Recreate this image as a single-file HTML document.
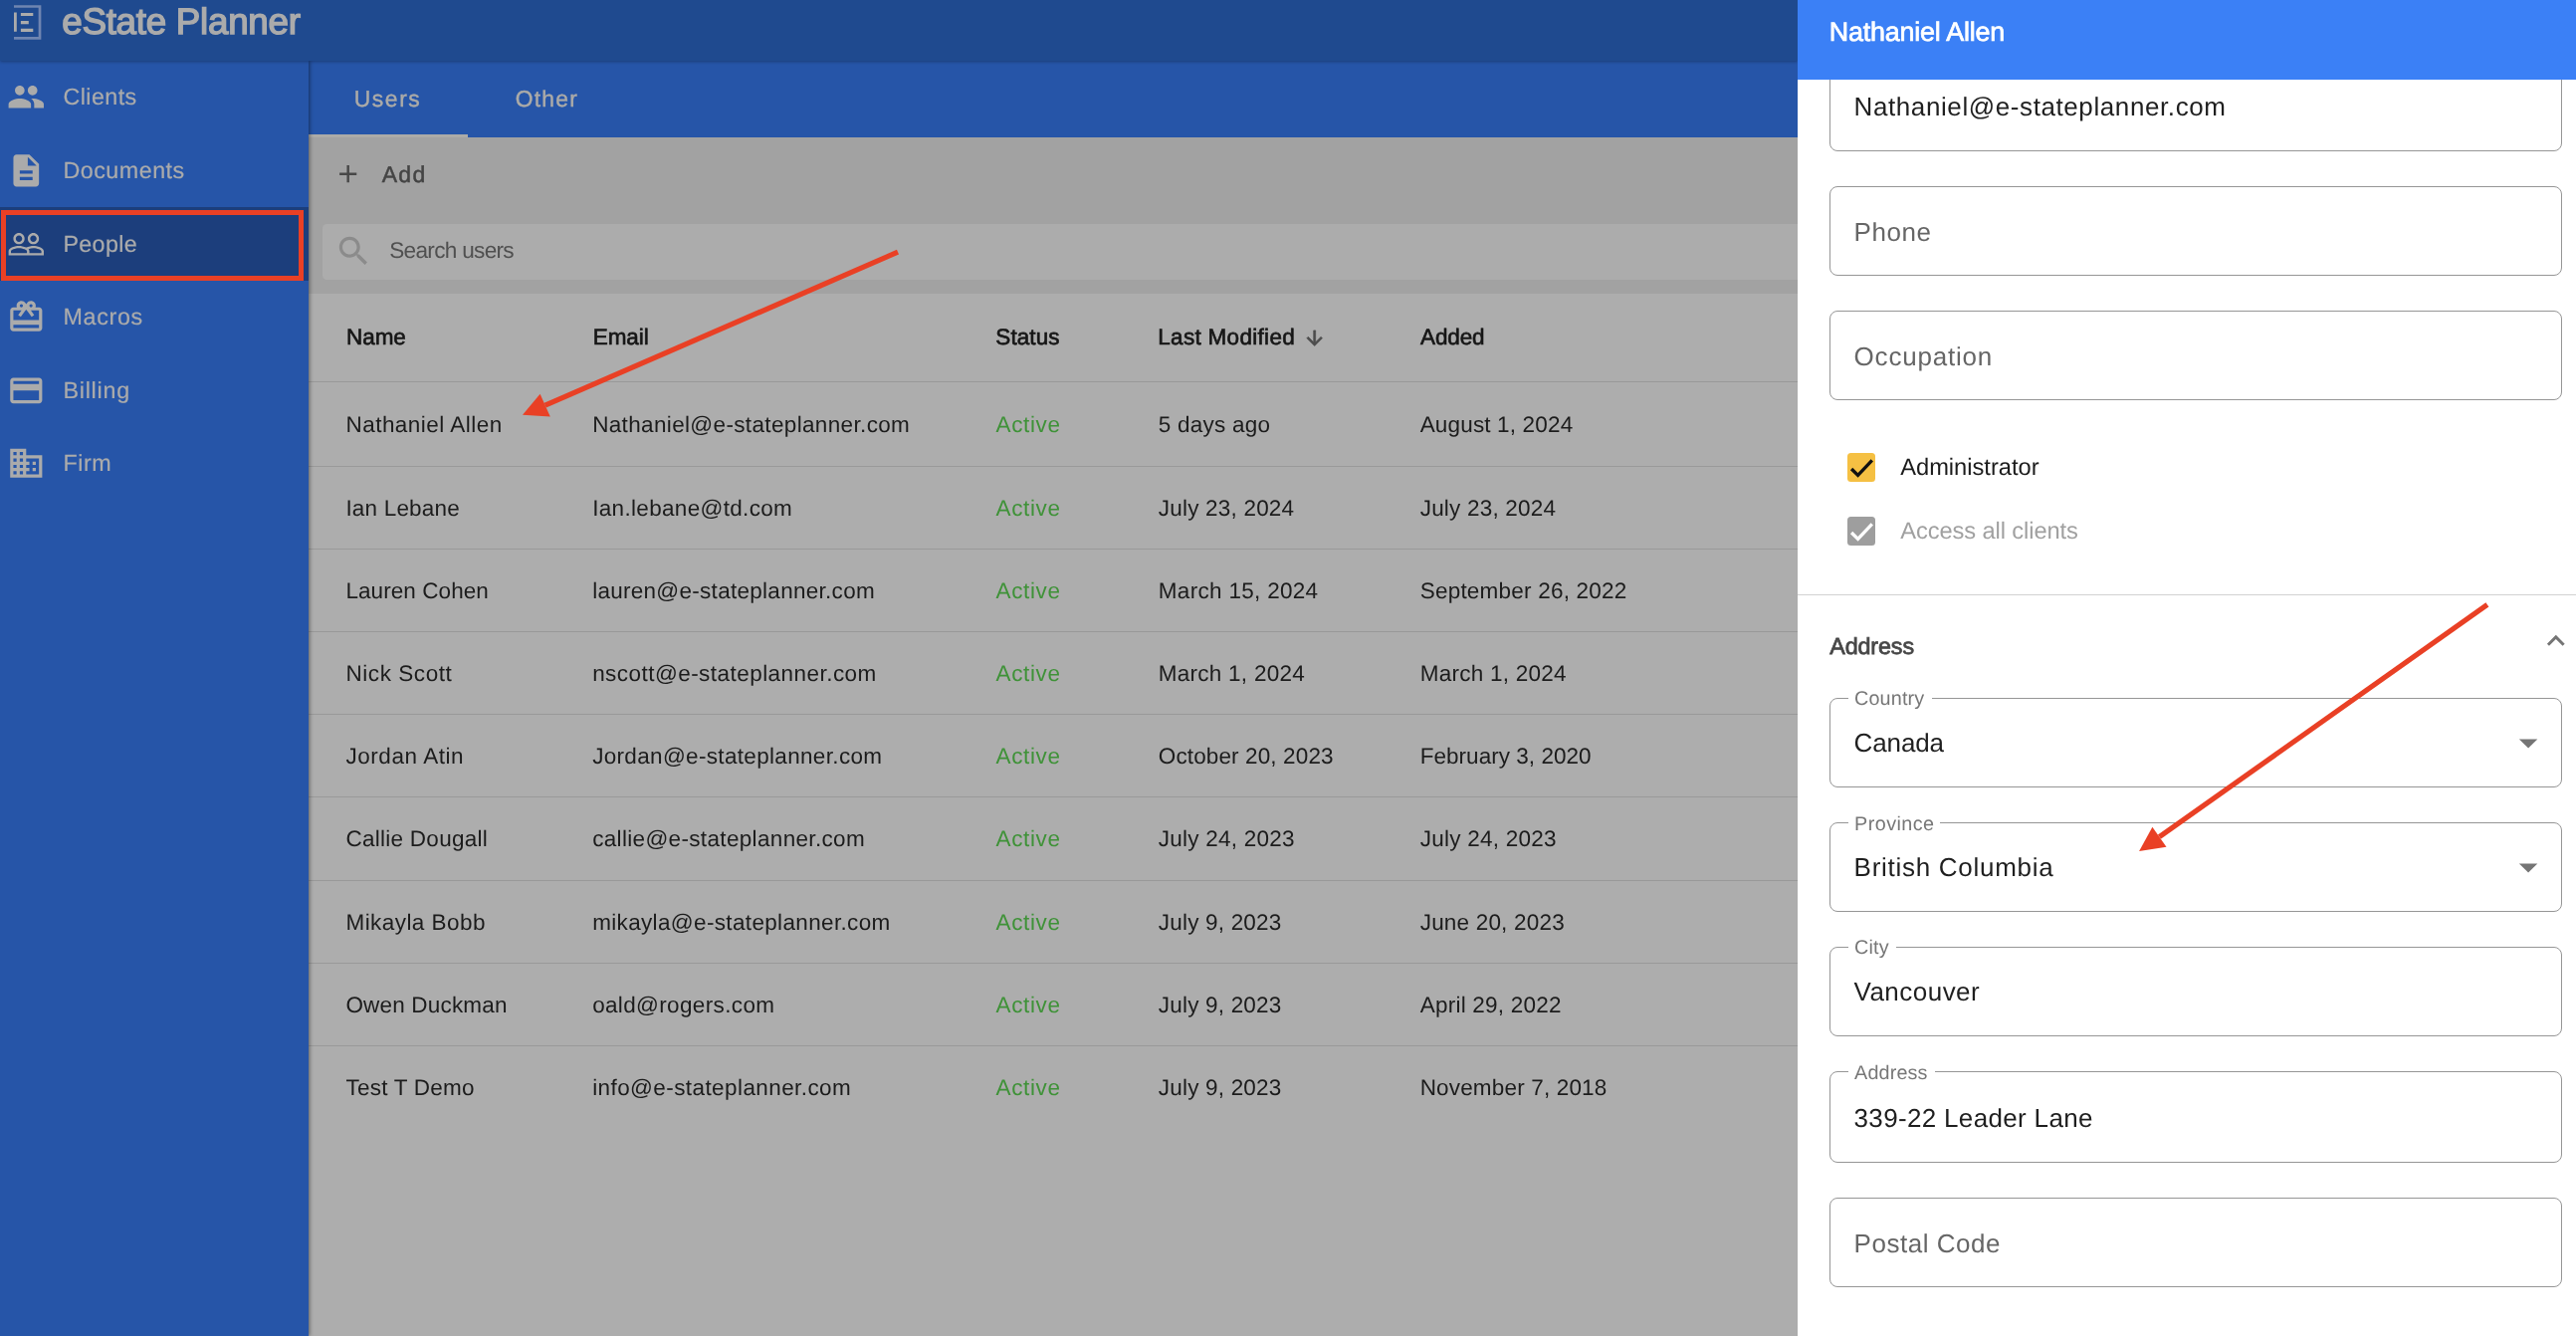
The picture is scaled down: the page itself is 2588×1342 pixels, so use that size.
<!DOCTYPE html>
<html><head><meta charset="utf-8"><title>eState Planner</title>
<style>
html,body{margin:0;padding:0}
body{width:2588px;height:1342px;overflow:hidden;position:relative;background:#adadad;font-family:"Liberation Sans", sans-serif}
div,svg{position:absolute}
.t{white-space:pre;line-height:1;font-weight:400;text-rendering:geometricPrecision}
.i{display:block}
.f{left:1838px;width:736px;box-sizing:border-box;border:1px solid #969696;border-radius:8px;background:#fff}
.n{height:4px;background:#fff}
.rl{left:310px;width:1496px;height:1px;background:#999999}
</style></head><body>
<!-- main area -->
<div style="left:310px;top:61px;width:1496px;height:77px;background:#2655a8"></div>
<div style="left:310px;top:135px;width:160px;height:3px;background:#acaba8"></div>
<div style="left:310px;top:138px;width:1496px;height:157px;background:#a2a2a2"></div>
<div style="left:324px;top:225px;width:1500px;height:56px;background:#acacac;border-radius:4.500px"></div>
<div style="left:310px;top:295px;width:1496px;height:1047px;background:#adadad"></div>
<div class="rl" style="top:383px"></div>
<div class="rl" style="top:468px"></div>
<div class="rl" style="top:551px"></div>
<div class="rl" style="top:634px"></div>
<div class="rl" style="top:717px"></div>
<div class="rl" style="top:800px"></div>
<div class="rl" style="top:884px"></div>
<div class="rl" style="top:967px"></div>
<div class="rl" style="top:1050px"></div>
<!-- sidebar -->
<div style="left:0;top:61px;width:309.500px;height:1281px;background:#2655a8;box-shadow:1px 0 4px rgba(0,0,0,.45)"></div>
<div style="left:0;top:208px;width:309.500px;height:74px;background:#1c3e7c"></div>
<div style="left:1px;top:211px;width:304px;height:71px;box-sizing:border-box;border:5px solid #e94025"></div>
<!-- header -->
<div style="left:0;top:0;width:1806px;height:61.400px;background:#1f4a8f;box-shadow:0 1px 3px rgba(0,0,0,.3)"></div>
<svg class="i" style="left:0;top:0" width="60" height="60" viewBox="0 0 60 60"><path fill="none" stroke="#6f85b1" stroke-width="2.700" d="M14 6.500H40V38.400H14"/><path fill="#ababab" d="M14 12.400h2.800v19.300H14zM20.900 13h12.400v3.100H20.900zM20.900 21.100h7.900v3.100H20.900zM20.900 28.800h12.400v3.100H20.900z"/></svg>
<!-- panel -->
<div style="left:1806px;top:0;width:782px;height:1342px;background:#fff"></div>
<div class="f" style="top:62px;height:90px"></div>
<div class="f" style="top:187px;height:90px"></div>
<div class="f" style="top:312px;height:90px"></div>
<div class="f" style="top:701px;height:90px"></div>
<div class="n" style="left:1857.0px;width:84.2px;top:700px"></div>
<div class="f" style="top:826px;height:90px"></div>
<div class="n" style="left:1857.0px;width:92.0px;top:825px"></div>
<div class="f" style="top:951px;height:90px"></div>
<div class="n" style="left:1857.0px;width:48.0px;top:950px"></div>
<div class="f" style="top:1076px;height:92px"></div>
<div class="n" style="left:1856.7px;width:87.3px;top:1075px"></div>
<div class="f" style="top:1203px;height:90px"></div>
<div style="left:1806px;top:0;width:782px;height:80px;background:#3b80f6"></div>
<div style="left:1856px;top:455px;width:28px;height:29px;border-radius:3.500px;background:#f5c043"></div>
<svg class="i" style="left:1856px;top:455px" width="28" height="29" viewBox="0 0 28 29"><path fill="none" stroke="#111" stroke-width="3.300" d="M4.100 16L10.600 22.500L24.800 7.300"/></svg>
<div style="left:1856px;top:519px;width:28px;height:29px;border-radius:3.500px;background:#9e9e9e"></div>
<svg class="i" style="left:1856px;top:519px" width="28" height="29" viewBox="0 0 28 29"><path fill="none" stroke="#fff" stroke-width="3.300" d="M4.100 16L10.600 22.500L24.800 7.300"/></svg>
<div style="left:1806px;top:597px;width:782px;height:1px;background:#d2d2d2"></div>
<svg class="i" style="left:7.4px;top:77.5px" width="38.6" height="38.6" viewBox="0 0 24 24"><path fill="#ababab" d="M16 11c1.66 0 2.99-1.34 2.99-3S17.66 5 16 5c-1.66 0-3 1.34-3 3s1.34 3 3 3zm-8 0c1.66 0 2.99-1.34 2.99-3S9.66 5 8 5C6.34 5 5 6.34 5 8s1.34 3 3 3zm0 2c-2.33 0-7 1.17-7 3.5V19h14v-2.5c0-2.33-4.67-3.5-7-3.5zm8 0c-.29 0-.62.02-.97.05 1.16.84 1.97 1.97 1.97 3.45V19h6v-2.5c0-2.33-4.67-3.5-7-3.5z"/></svg>
<svg class="i" style="left:7.4px;top:151.7px" width="38.6" height="38.6" viewBox="0 0 24 24"><path fill="#ababab" d="M14 2H6c-1.1 0-1.99.9-1.99 2L4 20c0 1.1.89 2 1.99 2H18c1.1 0 2-.9 2-2V8l-6-6zm2 16H8v-2h8v2zm0-4H8v-2h8v2zm-3-5V3.5L18.5 9H13z"/></svg>
<svg class="i" style="left:7.4px;top:225.7px" width="38.6" height="38.6" viewBox="0 0 24 24"><path fill="#ababab" d="M16.5 13c-1.2 0-3.07.34-4.5 1-1.43-.67-3.3-1-4.5-1C5.33 13 1 14.08 1 16.25V19h22v-2.75c0-2.17-4.33-3.25-6.5-3.25zm-4 4.5h-10v-1.25c0-.54 2.56-1.75 5-1.75s5 1.21 5 1.75v1.25zm9 0H14v-1.25c0-.46-.2-.86-.52-1.22.88-.3 1.96-.53 3.02-.53 2.44 0 5 1.21 5 1.75v1.25zM7.5 12c1.93 0 3.5-1.57 3.5-3.5S9.43 5 7.5 5 4 6.57 4 8.5 5.57 12 7.5 12zm0-5.5c1.1 0 2 .9 2 2s-.9 2-2 2-2-.9-2-2 .9-2 2-2zm9 5.5c1.93 0 3.5-1.57 3.5-3.5S18.43 5 16.5 5 13 6.57 13 8.5s1.57 3.5 3.5 3.5zm0-5.5c1.1 0 2 .9 2 2s-.9 2-2 2-2-.9-2-2 .9-2 2-2z"/></svg>
<svg class="i" style="left:7.4px;top:299.0px" width="38.6" height="38.6" viewBox="0 0 24 24"><path fill="#ababab" d="M20 6h-2.18c.11-.31.18-.65.18-1 0-1.66-1.34-3-3-3-1.05 0-1.96.54-2.5 1.35l-.5.67-.5-.68C10.96 2.54 10.05 2 9 2 7.34 2 6 3.34 6 5c0 .35.07.69.18 1H4c-1.11 0-1.99.89-1.99 2L2 19c0 1.11.89 2 2 2h16c1.11 0 2-.89 2-2V8c0-1.11-.89-2-2-2zm-5-2c.55 0 1 .45 1 1s-.45 1-1 1-1-.45-1-1 .45-1 1-1zM9 4c.55 0 1 .45 1 1s-.45 1-1 1-1-.45-1-1 .45-1 1-1zm11 15H4v-2h16v2zm0-5H4V8h5.08L7 10.83 8.62 12 11 8.76l1-1.36 1 1.36L15.38 12 17 10.83 14.92 8H20v6z"/></svg>
<svg class="i" style="left:7.4px;top:372.6px" width="38.6" height="38.6" viewBox="0 0 24 24"><path fill="#ababab" d="M20 4H4c-1.11 0-1.99.89-1.99 2L2 18c0 1.11.89 2 2 2h16c1.11 0 2-.89 2-2V6c0-1.11-.89-2-2-2zm0 14H4v-6h16v6zm0-10H4V6h16v2z"/></svg>
<svg class="i" style="left:7.4px;top:445.6px" width="38.6" height="38.6" viewBox="0 0 24 24"><path fill="#ababab" d="M12 7V3H2v18h20V7H12zM6 19H4v-2h2v2zm0-4H4v-2h2v2zm0-4H4V9h2v2zm0-4H4V5h2v2zm4 12H8v-2h2v2zm0-4H8v-2h2v2zm0-4H8V9h2v2zm0-4H8V5h2v2zm10 12h-8v-2h2v-2h-2v-2h2v-2h-2V9h8v10zm-2-8h-2v2h2v-2zm0 4h-2v2h2v-2z"/></svg>
<svg class="i" style="left:334.8px;top:159.9px" width="29.4" height="29.4" viewBox="0 0 24 24"><path fill="#484848" d="M19 13h-6v6h-2v-6H5v-2h6V5h2v6h6v2z"/></svg>
<svg class="i" style="left:336.0px;top:233.1px" width="38.6" height="38.6" viewBox="0 0 24 24"><path fill="#8b8b8b" d="M15.5 14h-.79l-.28-.27C15.41 12.59 16 11.11 16 9.5 16 5.91 13.09 3 9.5 3S3 5.91 3 9.5 5.91 16 9.5 16c1.61 0 3.09-.59 4.23-1.57l.27.28v.79l5 4.99L20.49 19l-4.99-5zm-6 0C7.01 14 5 11.99 5 9.5S7.01 5 9.5 5 14 7.01 14 9.5 11.99 14 9.5 14z"/></svg>
<svg class="i" style="left:1308.7px;top:328.4px" width="23.4" height="23.4" viewBox="0 0 24 24"><path stroke="#4d4d4d" stroke-width="0.7" fill="#4d4d4d" d="M20 12l-1.41-1.41L13 16.17V4h-2v12.17l-5.58-5.59L4 12l8 8 8-8z"/></svg>
<svg class="i" style="left:2549.5px;top:625.8px" width="35.6" height="35.6" viewBox="0 0 24 24"><path fill="#757575" d="M12 8l-6 6 1.41 1.41L12 10.83l4.59 4.58L18 14z"/></svg>
<svg class="i" style="left:2517.5px;top:724.1px" width="44.2" height="44.2" viewBox="0 0 24 24"><path fill="#757575" d="M7 10l5 5 5-5z"/></svg>
<svg class="i" style="left:2517.5px;top:848.6px" width="44.2" height="44.2" viewBox="0 0 24 24"><path fill="#757575" d="M7 10l5 5 5-5z"/></svg>
<div style="left:0;top:0;width:2588px;height:1342px;will-change:transform">
<div class="t" style="left:62.25px;top:4.00px;font-size:36.8px;color:#ababab;letter-spacing:-0.287px;-webkit-text-stroke:1.4px #ababab;">eState Planner</div>
<div class="t" style="left:63.41px;top:86.00px;font-size:23.3px;color:#ababab;letter-spacing:0.433px;-webkit-text-stroke:0.2px #ababab;">Clients</div>
<div class="t" style="left:63.41px;top:160.00px;font-size:23.3px;color:#ababab;letter-spacing:0.501px;-webkit-text-stroke:0.2px #ababab;">Documents</div>
<div class="t" style="left:63.41px;top:234.00px;font-size:23.3px;color:#ababab;letter-spacing:0.343px;-webkit-text-stroke:0.2px #ababab;">People</div>
<div class="t" style="left:63.41px;top:307.00px;font-size:23.3px;color:#ababab;letter-spacing:0.693px;-webkit-text-stroke:0.2px #ababab;">Macros</div>
<div class="t" style="left:63.41px;top:381.00px;font-size:23.3px;color:#ababab;letter-spacing:0.761px;-webkit-text-stroke:0.2px #ababab;">Billing</div>
<div class="t" style="left:63.41px;top:454.00px;font-size:23.3px;color:#ababab;letter-spacing:0.583px;-webkit-text-stroke:0.2px #ababab;">Firm</div>
<div class="t" style="left:355.77px;top:88.00px;font-size:22.9px;color:#acaba8;letter-spacing:1.562px;-webkit-text-stroke:0.4px #acaba8;">Users</div>
<div class="t" style="left:517.73px;top:88.00px;font-size:22.9px;color:#acaba8;letter-spacing:1.228px;-webkit-text-stroke:0.4px #acaba8;">Other</div>
<div class="t" style="left:383.75px;top:164.00px;font-size:23.0px;color:#444444;letter-spacing:1.284px;-webkit-text-stroke:0.5px #444444;">Add</div>
<div class="t" style="left:391.19px;top:241.00px;font-size:22.6px;color:#505050;letter-spacing:-0.694px;">Search users</div>
<div class="t" style="left:347.97px;top:328.00px;font-size:22.5px;color:#161616;letter-spacing:-0.033px;-webkit-text-stroke:0.65px #161616;">Name</div>
<div class="t" style="left:595.67px;top:328.00px;font-size:22.5px;color:#161616;letter-spacing:-0.018px;-webkit-text-stroke:0.65px #161616;">Email</div>
<div class="t" style="left:1000.32px;top:328.00px;font-size:22.5px;color:#161616;letter-spacing:0.074px;-webkit-text-stroke:0.65px #161616;">Status</div>
<div class="t" style="left:1163.27px;top:328.00px;font-size:22.5px;color:#161616;letter-spacing:0.304px;-webkit-text-stroke:0.65px #161616;">Last Modified</div>
<div class="t" style="left:1427.03px;top:328.00px;font-size:22.5px;color:#161616;letter-spacing:-0.112px;-webkit-text-stroke:0.65px #161616;">Added</div>
<div class="t" style="left:347.44px;top:416.00px;font-size:22.5px;color:#1c1c1c;letter-spacing:0.477px;">Nathaniel Allen</div>
<div class="t" style="left:595.14px;top:416.00px;font-size:22.5px;color:#1c1c1c;letter-spacing:0.350px;">Nathaniel@e-stateplanner.com</div>
<div class="t" style="left:1000.50px;top:416.00px;font-size:22.5px;color:#3f9238;letter-spacing:0.648px;">Active</div>
<div class="t" style="left:1163.80px;top:416.00px;font-size:22.5px;color:#1c1c1c;letter-spacing:0.226px;">5 days ago</div>
<div class="t" style="left:1426.70px;top:416.00px;font-size:22.5px;color:#1c1c1c;letter-spacing:0.161px;">August 1, 2024</div>
<div class="t" style="left:347.44px;top:500.00px;font-size:22.5px;color:#1c1c1c;letter-spacing:0.184px;">Ian Lebane</div>
<div class="t" style="left:595.14px;top:500.00px;font-size:22.5px;color:#1c1c1c;letter-spacing:0.329px;">Ian.lebane@td.com</div>
<div class="t" style="left:1000.50px;top:500.00px;font-size:22.5px;color:#3f9238;letter-spacing:0.648px;">Active</div>
<div class="t" style="left:1163.80px;top:500.00px;font-size:22.5px;color:#1c1c1c;letter-spacing:0.205px;">July 23, 2024</div>
<div class="t" style="left:1426.70px;top:500.00px;font-size:22.5px;color:#1c1c1c;letter-spacing:0.205px;">July 23, 2024</div>
<div class="t" style="left:347.44px;top:583.00px;font-size:22.5px;color:#1c1c1c;letter-spacing:0.073px;">Lauren Cohen</div>
<div class="t" style="left:595.14px;top:583.00px;font-size:22.5px;color:#1c1c1c;letter-spacing:0.284px;">lauren@e-stateplanner.com</div>
<div class="t" style="left:1000.50px;top:583.00px;font-size:22.5px;color:#3f9238;letter-spacing:0.648px;">Active</div>
<div class="t" style="left:1163.80px;top:583.00px;font-size:22.5px;color:#1c1c1c;letter-spacing:0.306px;">March 15, 2024</div>
<div class="t" style="left:1426.70px;top:583.00px;font-size:22.5px;color:#1c1c1c;letter-spacing:0.219px;">September 26, 2022</div>
<div class="t" style="left:347.44px;top:666.00px;font-size:22.5px;color:#1c1c1c;letter-spacing:0.568px;">Nick Scott</div>
<div class="t" style="left:595.14px;top:666.00px;font-size:22.5px;color:#1c1c1c;letter-spacing:0.456px;">nscott@e-stateplanner.com</div>
<div class="t" style="left:1000.50px;top:666.00px;font-size:22.5px;color:#3f9238;letter-spacing:0.648px;">Active</div>
<div class="t" style="left:1163.80px;top:666.00px;font-size:22.5px;color:#1c1c1c;letter-spacing:0.257px;">March 1, 2024</div>
<div class="t" style="left:1426.70px;top:666.00px;font-size:22.5px;color:#1c1c1c;letter-spacing:0.240px;">March 1, 2024</div>
<div class="t" style="left:347.44px;top:749.00px;font-size:22.5px;color:#1c1c1c;letter-spacing:0.560px;">Jordan Atin</div>
<div class="t" style="left:595.14px;top:749.00px;font-size:22.5px;color:#1c1c1c;letter-spacing:0.330px;">Jordan@e-stateplanner.com</div>
<div class="t" style="left:1000.50px;top:749.00px;font-size:22.5px;color:#3f9238;letter-spacing:0.648px;">Active</div>
<div class="t" style="left:1163.80px;top:749.00px;font-size:22.5px;color:#1c1c1c;letter-spacing:0.126px;">October 20, 2023</div>
<div class="t" style="left:1426.70px;top:749.00px;font-size:22.5px;color:#1c1c1c;letter-spacing:0.038px;">February 3, 2020</div>
<div class="t" style="left:347.44px;top:832.00px;font-size:22.5px;color:#1c1c1c;letter-spacing:0.270px;">Callie Dougall</div>
<div class="t" style="left:595.14px;top:832.00px;font-size:22.5px;color:#1c1c1c;letter-spacing:0.337px;">callie@e-stateplanner.com</div>
<div class="t" style="left:1000.50px;top:832.00px;font-size:22.5px;color:#3f9238;letter-spacing:0.648px;">Active</div>
<div class="t" style="left:1163.80px;top:832.00px;font-size:22.5px;color:#1c1c1c;letter-spacing:0.235px;">July 24, 2023</div>
<div class="t" style="left:1426.70px;top:832.00px;font-size:22.5px;color:#1c1c1c;letter-spacing:0.251px;">July 24, 2023</div>
<div class="t" style="left:347.44px;top:916.00px;font-size:22.5px;color:#1c1c1c;letter-spacing:0.446px;">Mikayla Bobb</div>
<div class="t" style="left:595.14px;top:916.00px;font-size:22.5px;color:#1c1c1c;letter-spacing:0.348px;">mikayla@e-stateplanner.com</div>
<div class="t" style="left:1000.50px;top:916.00px;font-size:22.5px;color:#3f9238;letter-spacing:0.648px;">Active</div>
<div class="t" style="left:1163.80px;top:916.00px;font-size:22.5px;color:#1c1c1c;letter-spacing:0.194px;">July 9, 2023</div>
<div class="t" style="left:1426.70px;top:916.00px;font-size:22.5px;color:#1c1c1c;letter-spacing:0.195px;">June 20, 2023</div>
<div class="t" style="left:347.44px;top:999.00px;font-size:22.5px;color:#1c1c1c;letter-spacing:0.178px;">Owen Duckman</div>
<div class="t" style="left:595.14px;top:999.00px;font-size:22.5px;color:#1c1c1c;letter-spacing:0.354px;">oald@rogers.com</div>
<div class="t" style="left:1000.50px;top:999.00px;font-size:22.5px;color:#3f9238;letter-spacing:0.648px;">Active</div>
<div class="t" style="left:1163.80px;top:999.00px;font-size:22.5px;color:#1c1c1c;letter-spacing:0.194px;">July 9, 2023</div>
<div class="t" style="left:1426.70px;top:999.00px;font-size:22.5px;color:#1c1c1c;letter-spacing:0.236px;">April 29, 2022</div>
<div class="t" style="left:347.44px;top:1082.00px;font-size:22.5px;color:#1c1c1c;letter-spacing:0.233px;">Test T Demo</div>
<div class="t" style="left:595.14px;top:1082.00px;font-size:22.5px;color:#1c1c1c;letter-spacing:0.418px;">info@e-stateplanner.com</div>
<div class="t" style="left:1000.50px;top:1082.00px;font-size:22.5px;color:#3f9238;letter-spacing:0.648px;">Active</div>
<div class="t" style="left:1163.80px;top:1082.00px;font-size:22.5px;color:#1c1c1c;letter-spacing:0.194px;">July 9, 2023</div>
<div class="t" style="left:1426.70px;top:1082.00px;font-size:22.5px;color:#1c1c1c;letter-spacing:0.164px;">November 7, 2018</div>
<div class="t" style="left:1837.85px;top:19.00px;font-size:26.9px;color:#ffffff;letter-spacing:-0.217px;-webkit-text-stroke:0.7px #ffffff;">Nathaniel Allen</div>
<div class="t" style="left:1862.57px;top:94.00px;font-size:26.0px;color:#1f1f1f;letter-spacing:0.593px;">Nathaniel@e-stateplanner.com</div>
<div class="t" style="left:1862.57px;top:220.00px;font-size:26.0px;color:#666666;letter-spacing:0.576px;">Phone</div>
<div class="t" style="left:1862.57px;top:345.00px;font-size:26.0px;color:#666666;letter-spacing:0.795px;">Occupation</div>
<div class="t" style="left:1863.07px;top:693.00px;font-size:19.8px;color:#777777;letter-spacing:0.133px;">Country</div>
<div class="t" style="left:1862.57px;top:733.00px;font-size:26.0px;color:#1f1f1f;letter-spacing:-0.124px;">Canada</div>
<div class="t" style="left:1863.07px;top:819.00px;font-size:19.8px;color:#777777;letter-spacing:0.431px;">Province</div>
<div class="t" style="left:1862.57px;top:858.00px;font-size:26.0px;color:#1f1f1f;letter-spacing:0.725px;">British Columbia</div>
<div class="t" style="left:1863.07px;top:943.00px;font-size:19.8px;color:#777777;letter-spacing:0.143px;">City</div>
<div class="t" style="left:1862.57px;top:983.00px;font-size:26.0px;color:#1f1f1f;letter-spacing:0.470px;">Vancouver</div>
<div class="t" style="left:1863.07px;top:1069.00px;font-size:19.8px;color:#777777;letter-spacing:0.147px;">Address</div>
<div class="t" style="left:1862.57px;top:1110.00px;font-size:26.0px;color:#1f1f1f;letter-spacing:0.333px;">339-22 Leader Lane</div>
<div class="t" style="left:1862.57px;top:1236.00px;font-size:26.0px;color:#666666;letter-spacing:0.524px;">Postal Code</div>
<div class="t" style="left:1909.20px;top:459.00px;font-size:23.7px;color:#1c1c1c;letter-spacing:-0.016px;">Administrator</div>
<div class="t" style="left:1909.20px;top:523.00px;font-size:23.7px;color:#a0a0a0;letter-spacing:-0.094px;">Access all clients</div>
<div class="t" style="left:1838.28px;top:638.00px;font-size:23.3px;color:#474747;letter-spacing:-0.116px;-webkit-text-stroke:0.75px #474747;">Address</div>
</div>
<!-- arrows -->
<svg class="i" style="left:0;top:0" width="2588" height="1342" viewBox="0 0 2588 1342">
<g fill="#e94025" stroke="none">
<path d="M902 253.200L547.700 407.200" stroke="#e94025" stroke-width="5.200" fill="none"/>
<path d="M525 416.700L542.600 395.800L552.800 418.600Z"/>
<path d="M2498.900 607.400L2169.400 840.700" stroke="#e94025" stroke-width="5.200" fill="none"/>
<path d="M2149.100 854.900L2162.400 830.700L2176.500 850.700Z"/>
</g></svg>
</body></html>
